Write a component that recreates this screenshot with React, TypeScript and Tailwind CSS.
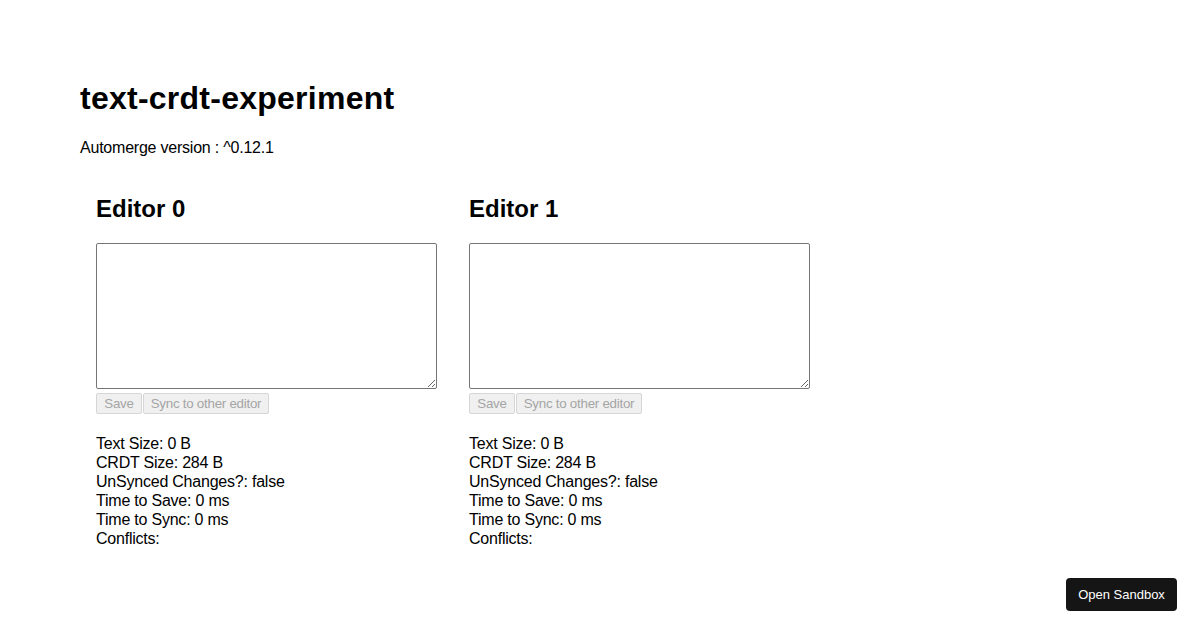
const stats = [
  "Text Size: 0 B",
  "CRDT Size: 284 B",
  "UnSynced Changes?: false",
  "Time to Save: 0 ms",
  "Time to Sync: 0 ms",
  "Conflicts:",
];

function Editor({ index }: { index: number }) {
  return (
    <div className="w-[341px] flex flex-col">
      <h2 className="text-[24px] font-bold leading-[28px]">Editor {index}</h2>
      <textarea
        className="mt-[20px] w-[341px] h-[146px] border border-[#767676] rounded-[2px] bg-white"
        defaultValue=""
      />
      <div className="mt-[4px] flex gap-px">
        <button
          disabled
          className="w-[46px] h-[21px] text-[13.33px] leading-[19px] tracking-[-0.25px] text-[#a5a5a5] bg-[#f0f0f0] border border-[#d6d6d6] rounded-[2px]"
        >
          Save
        </button>
        <button
          disabled
          className="w-[126px] h-[21px] text-[13.33px] leading-[19px] tracking-[-0.25px] text-[#a5a5a5] bg-[#f0f0f0] border border-[#d6d6d6] rounded-[2px]"
        >
          Sync to other editor
        </button>
      </div>
      <div className="mt-[20px] text-[16px] leading-[19px] tracking-[-0.22px]">
        {stats.map((s) => (
          <div key={s}>{s}</div>
        ))}
      </div>
    </div>
  );
}

export default function App() {
  return (
    <div
      className="relative w-[1200px] h-[630px] bg-white text-black pt-[80px] pl-[80px]"
      style={{ fontFamily: '"Liberation Sans", Arial, sans-serif' }}
    >
      <h1 className="text-[32px] font-bold leading-[37px] tracking-[0.25px]">text-crdt-experiment</h1>
      <p className="mt-[22px] text-[16px] leading-[18px] tracking-[-0.22px]">Automerge version : ^0.12.1</p>

      <div className="mt-[38px] pl-4 flex gap-8">
        <Editor index={0} />
        <Editor index={1} />
      </div>

      {/* Sandbox button */}
      <button className="absolute right-[23px] bottom-[19px] w-[111px] h-[33px] bg-[#151515] text-white text-[13px] rounded-[4px]">
        Open Sandbox
      </button>
    </div>
  );
}
